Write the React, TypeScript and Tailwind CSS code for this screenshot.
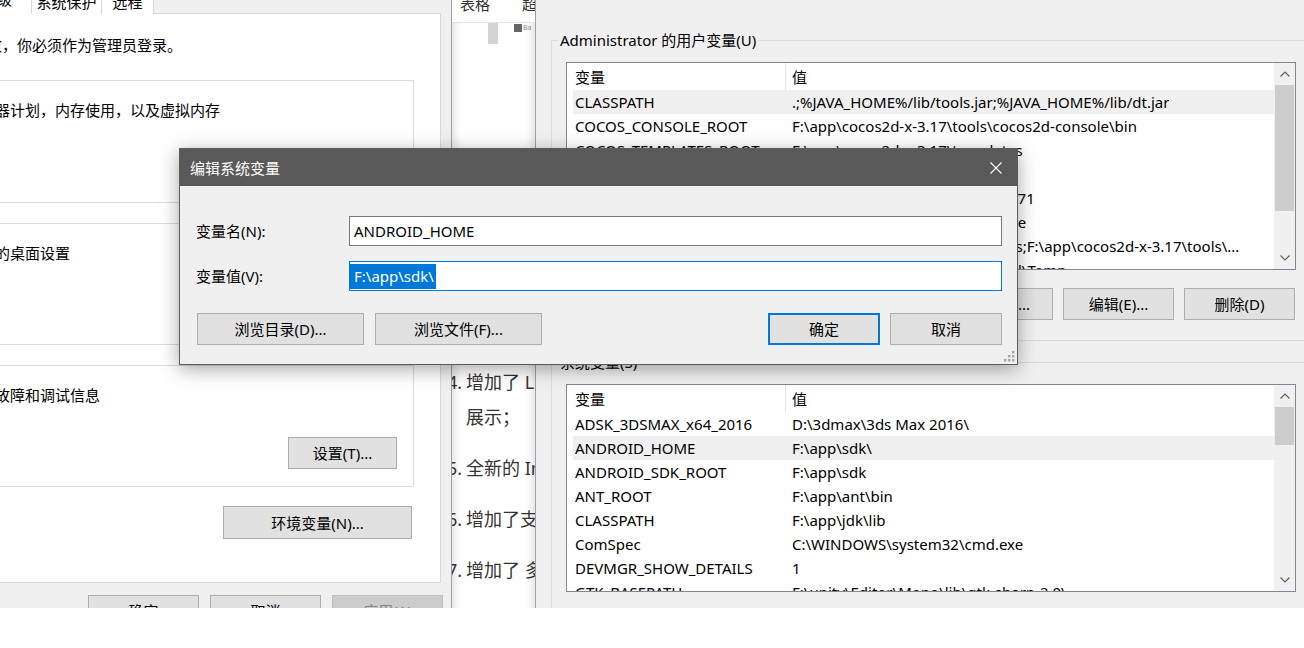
import clsx from "clsx";

const userVars: [string, string][] = [
  ["CLASSPATH", ".;%JAVA_HOME%/lib/tools.jar;%JAVA_HOME%/lib/dt.jar"],
  ["COCOS_CONSOLE_ROOT", "F:\\app\\cocos2d-x-3.17\\tools\\cocos2d-console\\bin"],
  ["COCOS_TEMPLATES_ROOT", "F:\\app\\cocos2d-x-3.17\\templates"],
  ["COCOS_X_ROOT", "F:\\app"],
  ["JAVA_HOME", "C:\\Program Files\\Java\\jdk1.8.0_171"],
  ["OneDrive", "C:\\Users\\Administrator\\OneDrive"],
  ["Path", "F:\\app\\cocos2d-x-3.17\\templates;F:\\app\\cocos2d-x-3.17\\tools\\..."],
  ["TEMP", "%USERPROFILE%\\AppData\\Local\\Temp"],
];

const systemVars: [string, string][] = [
  ["ADSK_3DSMAX_x64_2016", "D:\\3dmax\\3ds Max 2016\\"],
  ["ANDROID_HOME", "F:\\app\\sdk\\"],
  ["ANDROID_SDK_ROOT", "F:\\app\\sdk"],
  ["ANT_ROOT", "F:\\app\\ant\\bin"],
  ["CLASSPATH", "F:\\app\\jdk\\lib"],
  ["ComSpec", "C:\\WINDOWS\\system32\\cmd.exe"],
  ["DEVMGR_SHOW_DETAILS", "1"],
  ["GTK_BASEPATH", "F:\\unity\\Editor\\Mono\\lib\\gtk-sharp-2.0\\"],
];

type ButtonProps = {
  label: string;
  className?: string;
  primary?: boolean;
  disabled?: boolean;
};

function WinButton({ label, className, primary, disabled }: ButtonProps) {
  return (
    <div
      className={clsx(
        "flex h-[32px] shrink-0 items-center justify-center whitespace-nowrap",
        primary
          ? "border-2 border-[#0078d7] bg-[#e1e1e1]"
          : disabled
            ? "border border-[#bfbfbf] bg-[#cccccc] text-[#838383]"
            : "border border-[#adadad] bg-[#e1e1e1]",
        className
      )}
    >
      {label}
    </div>
  );
}

function Chevron({ down }: { down?: boolean }) {
  return (
    <svg width="10" height="6" viewBox="0 0 10 6" className={down ? "rotate-180" : ""}>
      <path d="M0.5 5.5 L5 1 L9.5 5.5" fill="none" stroke="#606060" strokeWidth="1.2" />
    </svg>
  );
}

function ListView({ rows, selected, thumb }: { rows: [string, string][]; selected: number; thumb: string }) {
  return (
    <div className="flex h-[208px] w-[730px] border border-[#828790] bg-white">
      <div className="min-w-0 flex-1 overflow-hidden pl-[6px]">
        <div className="flex h-[27px] items-center">
          <div className="flex h-full w-[213px] shrink-0 items-center border-r border-[#e5e5e5] pl-[2px]">变量</div>
          <div className="pl-[6px]">值</div>
        </div>
        {rows.map(([name, value], i) => (
          <div
            key={name}
            className={clsx("flex h-[24px] items-center whitespace-nowrap", i === selected && "bg-[#f0f0f0]")}
          >
            <div className="w-[213px] shrink-0 overflow-hidden pl-[2px]">{name}</div>
            <div className="min-w-0 overflow-hidden pl-[6px]">{value}</div>
          </div>
        ))}
      </div>
      <div className="flex w-[21px] shrink-0 flex-col bg-[#f0f0f0]">
        <div className="flex h-[22px] items-center justify-center">
          <Chevron />
        </div>
        <div className={clsx("mx-px bg-[#cdcdcd]", thumb)} />
        <div className="flex-1" />
        <div className="flex h-[22px] items-center justify-center">
          <Chevron down />
        </div>
      </div>
    </div>
  );
}

function GroupBox({ text, button, className }: { text: string; button: string; className: string }) {
  return (
    <div className={clsx("ml-[7px] flex w-[534px] flex-col border border-[#dcdcdc]", className)}>
      <div className="ml-[9px] mt-[19px] h-[20px] whitespace-nowrap leading-[20px]">{text}</div>
      <WinButton label={button} className="ml-auto mr-[16px] mt-[32px] w-[109px]" />
    </div>
  );
}

function SystemProperties() {
  return (
    <div className="h-[608px] w-[452px] shrink-0 overflow-hidden border-r border-[#a0a0a0] bg-[#f0f0f0]">
      <div className="-ml-[128px] w-[569px]">
        <div className="-mt-[14px] flex h-[28px] items-end pl-[90px]">
          <div className="relative z-10 flex h-[28px] w-[70px] items-center justify-center border-x border-t border-[#d9d9d9] bg-white pb-[3px]">
            高级
          </div>
          <div className="flex h-[25px] w-[70px] items-center justify-center border-r border-t border-[#d9d9d9] bg-white">
            系统保护
          </div>
          <div className="flex h-[25px] w-[52px] items-center justify-center border-r border-t border-[#d9d9d9] bg-white">
            远程
          </div>
        </div>
        <div className="-mt-px flex h-[570px] flex-col border border-[#d9d9d9] bg-white">
          <div className="ml-[9px] mt-[21px] h-[20px] whitespace-nowrap leading-[20px]">
            要进行大多数更改，你必须作为管理员登录。
          </div>
          <GroupBox className="mt-[25px] h-[123px]" text="视觉效果，处理器计划，内存使用，以及虚拟内存" button="设置(S)..." />
          <GroupBox className="mt-[20px] h-[122px]" text="与登录帐户相关的桌面设置" button="设置(E)..." />
          <GroupBox className="mt-[20px] h-[122px]" text="系统启动、系统故障和调试信息" button="设置(T)..." />
          <WinButton label="环境变量(N)..." className="ml-auto mr-[28px] mt-[19px] h-[33px] w-[189px]" />
        </div>
        <div className="mt-[12px] flex gap-[11px] pl-[216px]">
          <WinButton label="确定" className="w-[111px]" />
          <WinButton label="取消" className="w-[111px]" />
          <WinButton label="应用(A)" className="w-[111px]" disabled />
        </div>
      </div>
    </div>
  );
}

function DocumentStrip() {
  const items: { num: string; lines: string[] }[] = [
    { num: "4.", lines: ["增加了 Lint", "展示；"] },
    { num: "5.", lines: ["全新的 Intent"] },
    { num: "6.", lines: ["增加了支持"] },
    { num: "7.", lines: ["增加了 多线"] },
  ];
  return (
    <div className="flex h-[608px] w-[83px] shrink-0 flex-col overflow-hidden bg-white text-[#333]">
      <div className="flex h-[23px] shrink-0 items-start whitespace-nowrap border-b border-[#e3e3e3]">
        <span className="-mt-[6px] ml-[8px] shrink-0 leading-[20px]">表格</span>
        <span className="-mt-[6px] ml-[32px] shrink-0 leading-[20px]">超</span>
      </div>
      <div className="flex-1 shadow-[inset_10px_0_8px_-8px_rgba(0,0,0,0.14),inset_-10px_0_8px_-8px_rgba(0,0,0,0.14)]">
        <div className="flex h-[21px] items-start whitespace-nowrap">
          <div className="ml-[36px] h-[21px] w-[10px] shrink-0 bg-[#d4d4d4]" />
          <div className="ml-[16px] mt-[1px] h-[8px] w-[8px] shrink-0 bg-[#666]" />
          <span className="ml-[1px] text-[7px] leading-[10px] text-[#888]">Ba</span>
        </div>
        <div className="-ml-[5px] mt-[321px] flex flex-col gap-[16px] text-[18px] leading-[35px]">
          {items.map((item) => (
            <div key={item.num} className="flex whitespace-nowrap">
              <span className="w-[19px] shrink-0">{item.num}</span>
              <div>
                {item.lines.map((line) => (
                  <div key={line}>{line}</div>
                ))}
              </div>
            </div>
          ))}
        </div>
      </div>
    </div>
  );
}

function EnvironmentVariables() {
  return (
    <div className="h-[608px] min-w-0 flex-1 overflow-hidden border-l border-[#a0a0a0] bg-[#f0f0f0] pl-[15px]">
      <fieldset className="mt-[30px] w-[800px] border border-[#dcdcdc] pb-[20px]">
        <legend className="ml-[6px] px-[2px] leading-[20px]">Administrator 的用户变量(U)</legend>
        <div className="ml-[14px] mt-[12px]">
          <ListView rows={userVars} selected={0} thumb="h-[126px]" />
        </div>
        <div className="ml-[14px] mt-[18px] flex w-[729px] justify-end gap-[10px]">
          <WinButton label="新建(W)..." className="w-[111px]" />
          <WinButton label="编辑(E)..." className="w-[111px]" />
          <WinButton label="删除(D)" className="w-[111px]" />
        </div>
      </fieldset>
      <fieldset className="mt-[11px] w-[800px] border border-[#dcdcdc] pb-[20px]">
        <legend className="ml-[6px] px-[2px] leading-[20px]">系统变量(S)</legend>
        <div className="ml-[14px] mt-[12px]">
          <ListView rows={systemVars} selected={1} thumb="h-[38px]" />
        </div>
        <div className="ml-[14px] mt-[18px] flex w-[729px] justify-end gap-[10px]">
          <WinButton label="新建(W)..." className="w-[111px]" />
          <WinButton label="编辑(I)..." className="w-[111px]" />
          <WinButton label="删除(L)" className="w-[111px]" />
        </div>
      </fieldset>
    </div>
  );
}

function EditDialog() {
  return (
    <div className="absolute left-[179px] top-[148px] flex h-[217px] w-[839px] flex-col border border-[#5c5c5c] bg-[#f0f0f0] shadow-[0_4px_18px_rgba(0,0,0,0.35)]">
      <div className="flex h-[37px] shrink-0 items-center justify-between bg-[#595959] pl-[10px] pr-[15px] text-white">
        <span>编辑系统变量</span>
        <svg width="12" height="12" viewBox="0 0 12 12">
          <path d="M0.5 0.5 L11.5 11.5 M11.5 0.5 L0.5 11.5" stroke="#ffffff" strokeWidth="1.1" />
        </svg>
      </div>
      <div className="relative flex flex-1 flex-col pl-[16px] pr-[15px]">
        <div className="mt-[30px] flex h-[30px] items-center">
          <div className="w-[153px] shrink-0">变量名(N):</div>
          <div className="flex h-[30px] flex-1 items-center border border-[#7a7a7a] bg-white pl-[4px]">ANDROID_HOME</div>
        </div>
        <div className="mt-[15px] flex h-[30px] items-center">
          <div className="w-[153px] shrink-0">变量值(V):</div>
          <div className="flex h-[30px] flex-1 items-center border border-[#0078d7] bg-white">
            <span className="bg-[#0078d7] pl-[4px] pr-[2px] leading-[25px] text-white">F:\app\sdk\</span>
          </div>
        </div>
        <div className="ml-px mt-[22px] flex">
          <WinButton label="浏览目录(D)..." className="w-[167px]" />
          <WinButton label="浏览文件(F)..." className="ml-[11px] w-[167px]" />
          <WinButton label="确定" className="ml-auto w-[112px]" primary />
          <WinButton label="取消" className="ml-[10px] w-[112px]" />
        </div>
        <svg width="11" height="11" viewBox="0 0 11 11" className="absolute bottom-[2px] right-[2px]">
          <g fill="#a6a6a6">
            <rect x="8" y="0" width="2.4" height="2.4" />
            <rect x="4" y="4" width="2.4" height="2.4" />
            <rect x="8" y="4" width="2.4" height="2.4" />
            <rect x="0" y="8" width="2.4" height="2.4" />
            <rect x="4" y="8" width="2.4" height="2.4" />
            <rect x="8" y="8" width="2.4" height="2.4" />
          </g>
        </svg>
      </div>
    </div>
  );
}

export default function App() {
  return (
    <div className="relative h-[648px] w-[1304px] overflow-hidden bg-white font-['Noto_Sans','Noto_Sans_CJK_SC',sans-serif] text-[15px] leading-[20px] text-black">
      <div className="flex h-[608px] w-[1304px] overflow-hidden">
        <SystemProperties />
        <DocumentStrip />
        <EnvironmentVariables />
      </div>
      <EditDialog />
    </div>
  );
}
